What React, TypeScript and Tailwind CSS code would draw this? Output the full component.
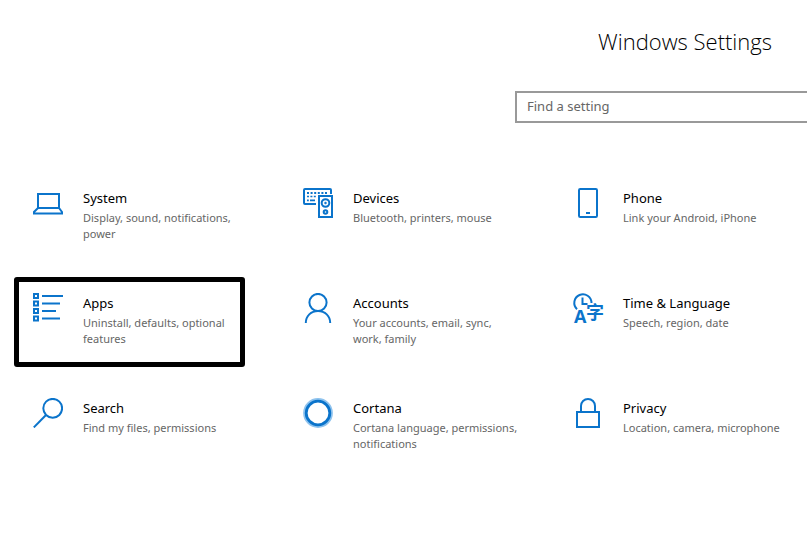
import React, { useState } from 'react'

const SystemIcon = () => (
    <svg className="w-[30px] h-[30px] shrink-0" viewBox="0 0 30 30" fill="none" stroke="#0b74cb" strokeWidth="2">
        <path d="M5 20V6h21v14" />
        <path d="M5 20h21l3 4v1.5H1V24z" />
    </svg>
)

const DevicesIcon = () => (
    <svg className="w-[30px] h-[30px] shrink-0" viewBox="0 0 30 30" fill="none" stroke="#0b74cb" strokeWidth="2">
        <path d="M13 16H2a1 1 0 0 1-1-1V2a1 1 0 0 1 1-1h25a1 1 0 0 1 1 1v4" />
        <path d="M4 5h21" strokeDasharray="2 1.6" />
        <path d="M4 8.5h10" strokeDasharray="2 1.4" strokeWidth="1.6" />
        <path d="M4 12.3h1.8M7 12.3h5" strokeWidth="1.8" />
        <path d="M16 8h13v21H16z" fill="#fff" />
        <circle cx="22.5" cy="15" r="3.8" />
        <circle cx="22.5" cy="15" r="1" fill="#0b74cb" strokeWidth="0.5" />
        <circle cx="22.5" cy="24" r="1.8" />
    </svg>
)

const PhoneIcon = () => (
    <svg className="w-[30px] h-[30px] shrink-0" viewBox="0 0 30 30" fill="none" stroke="#0b74cb" strokeWidth="2">
        <rect x="6" y="1" width="18" height="28" rx="1.2" />
        <path d="M13 25h4" />
    </svg>
)

const AppsIcon = () => (
    <svg className="w-[30px] h-[30px] shrink-0" viewBox="0 0 30 30" fill="none" stroke="#0b74cb" strokeWidth="2">
        <path d="M1 1h4v4H1zM1 8.5h4v4H1zM1 16h4v4H1zM1 23.5h4v4H1z" />
        <path d="M9 3h21M9 10.5h18M9 18h14M9 25.5h18" />
    </svg>
)

const AccountsIcon = () => (
    <svg className="w-[30px] h-[30px] shrink-0" viewBox="0 0 30 30" fill="none" stroke="#0b74cb" strokeWidth="2">
        <circle cx="15" cy="9.5" r="8.6" />
        <path d="M2.8 30c0-7 5.2-12 12.2-12s12.2 5 12.2 12" />
    </svg>
)

const TimeIcon = () => (
    <svg className="w-[30px] h-[30px] shrink-0 overflow-visible" viewBox="0 0 30 30" fill="none" stroke="#0b74cb" strokeWidth="2">
        <path d="M4 16.2A8.6 8.6 0 1 1 18.5 10" />
        <path d="M9.5 4.5V11h5" />
        <text x="1" y="30" fontSize="18" fontWeight="700" fontFamily="Open Sans, sans-serif" fill="#0b74cb" stroke="none">A</text>
        <text x="13" y="26" fontSize="18" fontWeight="700" fontFamily="Noto Sans CJK SC, sans-serif" fill="#0b74cb" stroke="none">字</text>
    </svg>
)

const SearchIcon = () => (
    <svg className="w-[30px] h-[30px] shrink-0" viewBox="0 0 30 30" fill="none" stroke="#0b74cb" strokeWidth="2">
        <circle cx="19.7" cy="10.3" r="9.4" />
        <path d="M13 17L.8 29.4" />
    </svg>
)

const CortanaIcon = () => (
    <svg className="w-[30px] h-[30px] shrink-0" viewBox="0 0 30 30" fill="none">
        <circle cx="15" cy="15" r="13.4" stroke="#8fc3ee" strokeWidth="3" />
        <circle cx="15" cy="15" r="11.8" stroke="#0b74cb" strokeWidth="2.8" />
    </svg>
)

const PrivacyIcon = () => (
    <svg className="w-[30px] h-[30px] shrink-0" viewBox="0 0 30 30" fill="none" stroke="#0b74cb" strokeWidth="2">
        <path d="M4 14h22v15H4z" />
        <path d="M8 14V8a7 7 0 0 1 14 0v6" />
    </svg>
)

const categories = [
    { name: 'System', text: 'Display, sound, notifications, power', icon: <SystemIcon /> },
    { name: 'Devices', text: 'Bluetooth, printers, mouse', icon: <DevicesIcon /> },
    { name: 'Phone', text: 'Link your Android, iPhone', icon: <PhoneIcon /> },
    { name: 'Apps', text: 'Uninstall, defaults, optional features', icon: <AppsIcon />, marked: true },
    { name: 'Accounts', text: 'Your accounts, email, sync, work, family', icon: <AccountsIcon /> },
    { name: 'Time & Language', text: 'Speech, region, date', icon: <TimeIcon /> },
    { name: 'Search', text: 'Find my files, permissions', icon: <SearchIcon /> },
    { name: 'Cortana', text: 'Cortana language, permissions, notifications', icon: <CortanaIcon /> },
    { name: 'Privacy', text: 'Location, camera, microphone', icon: <PrivacyIcon /> },
]

const App = () => {
    const [search, setSearch] = useState('')

    return (
        <div className="w-full min-h-screen bg-white font-['Noto_Sans',sans-serif]">

            <header className="flex flex-col items-end pt-6 gap-[33px]">
                <h1 className="pr-[35px] text-[22px] leading-[34px] font-light text-black font-['Open_Sans','Noto_Sans',sans-serif]">Windows Settings</h1>
                <input
                    type="text"
                    aria-label="Find a setting"
                    placeholder="Find a setting"
                    value={search}
                    onChange={(e) => setSearch(e.target.value)}
                    className="w-[292px] h-8 pl-[10px] pb-[2px] border-2 border-r-0 border-[#999999] text-[13px] text-black placeholder:text-[#666666] outline-none"
                />
            </header>

            <main className="grid grid-cols-3 gap-x-[30px] gap-y-[15px] pt-[49px] pl-[14px] pr-[13px] pb-10">
                {categories.map((item) => (
                    <a key={item.name} href="#" className="relative flex items-start gap-5 min-h-[90px] pt-4 pl-[19px]">
                        {item.icon}
                        <span className="flex flex-col">
                            <span className="text-[13px] leading-5 text-black">{item.name}</span>
                            <span className="pt-[2px] pr-1 text-[11px] leading-4 text-[#666666]">{item.text}</span>
                        </span>
                        {item.marked && <span className="absolute inset-y-0 left-0 right-[9px] border-5 border-black rounded-[3px]"></span>}
                    </a>
                ))}
            </main>

        </div>
    )
}

export default App
